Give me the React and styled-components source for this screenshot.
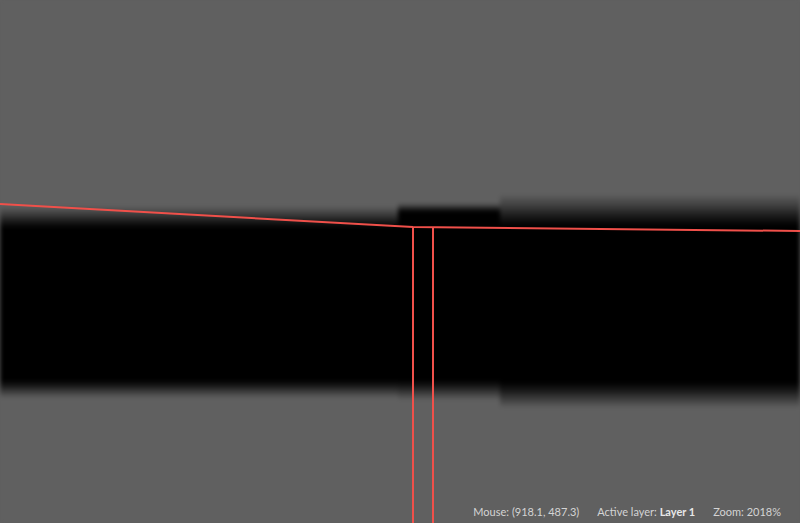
import styled, { createGlobalStyle } from "styled-components";

const GlobalStyle = createGlobalStyle`
  html, body {
    margin: 0;
    padding: 0;
    background: #606060;
    overflow: hidden;
  }
`;

const GRAY = "#606060";

const Viewport = styled.div`
  position: relative;
  width: 800px;
  height: 523px;
  overflow: hidden;
  background: ${GRAY};
  font-family: Lato, "Noto Sans", sans-serif;
`;

// the zoomed-in image itself; a small blur softens the seams between strips
const Canvas = styled.div`
  display: flex;
  height: 100%;
  filter: blur(2px);
`;

// one vertical strip of the zoomed image: gray, blurred edge, black band, blurred edge, gray
const Strip = styled.div`
  flex: ${(p) => (p.$width ? `0 0 ${p.$width}px` : "1 1 auto")};
  height: 100%;
  background: linear-gradient(
    to bottom,
    ${GRAY} ${(p) => p.$fadeIn}px,
    #404040 ${(p) => p.$fadeIn + (p.$top - p.$fadeIn) * 0.35}px,
    #1a1a1a ${(p) => p.$fadeIn + (p.$top - p.$fadeIn) * 0.7}px,
    #000 ${(p) => p.$top}px,
    #000 ${(p) => p.$bottom}px,
    #161616 ${(p) => p.$bottom + (p.$fadeOut - p.$bottom) * 0.3}px,
    #3c3c3c ${(p) => p.$bottom + (p.$fadeOut - p.$bottom) * 0.65}px,
    ${GRAY} ${(p) => p.$fadeOut}px
  );
`;

const Guides = styled.svg`
  position: absolute;
  inset: 0;
  pointer-events: none;
`;

const StatusBar = styled.div`
  position: absolute;
  right: 19px;
  bottom: 3px;
  display: flex;
  align-items: center;
  gap: 18px;
  height: 18px;
  font-size: 11px;
  color: #d4d4d4;
  white-space: nowrap;
`;

const StatusItem = styled.span`
  & b {
    font-weight: 700;
    color: #e8e8e8;
  }
`;

const GUIDE = "#f0504a";

export default function App() {
  return (
    <>
      <GlobalStyle />
      <Viewport>
        <Canvas>
          <Strip $width={398} $fadeIn={206} $top={228} $bottom={380} $fadeOut={398} />
          <Strip $width={102} $fadeIn={203} $top={212} $bottom={380} $fadeOut={400} />
          <Strip $fadeIn={194} $top={226} $bottom={382} $fadeOut={408} />
        </Canvas>
        <Guides width="800" height="523" viewBox="0 0 800 523">
          <polyline
            points="0,204 413,227 800,231"
            fill="none"
            stroke={GUIDE}
            strokeWidth="2"
          />
          <rect x="412" y="227" width="2" height="296" fill={GUIDE} />
          <rect x="432" y="227" width="2" height="296" fill={GUIDE} />
        </Guides>
        <StatusBar>
          <StatusItem>Mouse: (918.1, 487.3)</StatusItem>
          <StatusItem>
            Active layer: <b>Layer 1</b>
          </StatusItem>
          <StatusItem>Zoom: 2018%</StatusItem>
        </StatusBar>
      </Viewport>
    </>
  );
}
